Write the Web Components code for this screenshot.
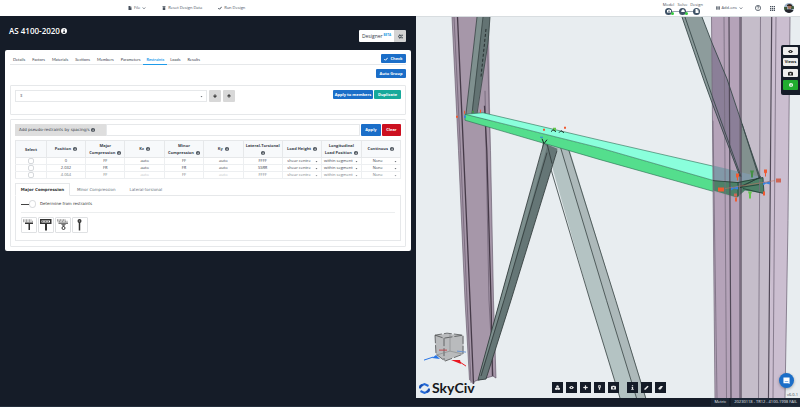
<!DOCTYPE html>
<html lang="en">
<head>
<meta charset="utf-8">
<title>AS 4100-2020 Restraints</title>
<style>
:root{--ink:#39414a;--navy:#151c28;--blue:#1b6ec8;--line:#e6e8ea;--wide:"DejaVu Sans",sans-serif}
html,body{margin:0;height:100%}
body{font:4px/6px "Open Sans",sans-serif;color:var(--ink);background:var(--navy)}
</style>
</head>
<body>
<design-app></design-app>
<script>
const define=(name,html,init)=>customElements.define(name,class extends HTMLElement{
  constructor(){super();this.attachShadow({mode:'open'});}
  connectedCallback(){
    if(this.shadowRoot.childNodes.length)return;
    const t=document.createElement('template');
    t.innerHTML='<style>*{box-sizing:border-box}button,select,input{font:inherit;color:inherit;margin:0;padding:0;border:0;background:none;border-radius:0;min-width:0}a{color:inherit;text-decoration:none}</style>'+(typeof html==='function'?html(this):html);
    this.shadowRoot.append(t.content.cloneNode(true));
    if(init)init(this);
  }
});

const icons={
  file:'<path d="M2 0h7v5h5v11H2z"/><path d="M10 0l4 4h-4z"/>',
  down:'<path d="M3 6l5 5 5-5" fill="none" stroke="currentColor" stroke-width="3"/>',
  caret:'<path d="M3 6h10l-5 6z"/>',
  trash:'<path d="M2 1h12v3H2zM3 5h10v11H3z"/>',
  check:'<path d="M1 8l5 5L15 3" fill="none" stroke="currentColor" stroke-width="4"/>',
  info:'<path fill-rule="evenodd" d="M8 0a8 8 0 100 16A8 8 0 008 0zM7 3h3v3H7zM6 7h4v4h1v2H5v-2h2V9H6z"/>',
  cogs:'<circle cx="6" cy="8" r="4" fill="none" stroke="currentColor" stroke-width="3"/><path d="M5 1h2v3H5zM5 12h2v3H5zM0 7h2v2H0z"/><circle cx="13" cy="4" r="2.5"/><circle cx="13" cy="12" r="2.5"/>',
  plus:'<path d="M6 1h4v5h5v4h-5v5H6v-5H1V6h5z"/>',
  plusd:'<path d="M6 1h4v5h5v3l-7 7-7-7V6h5z"/>',
  plusu:'<path d="M6 15h4v-5h5V7L8 0 1 7v3h5z"/>',
  grid4:'<path d="M0 2h7v5H0zM9 2h7v5H9zM0 9h7v5H0zM9 9h7v5H9z"/>',
  grid9:'<path d="M0 0h4v4H0zM6 0h4v4H6zM12 0h4v4h-4zM0 6h4v4H0zM6 6h4v4H6zM12 6h4v4h-4zM0 12h4v4H0zM6 12h4v4H6zM12 12h4v4h-4z"/>',
  help:'<circle cx="8" cy="8" r="7" fill="none" stroke="currentColor" stroke-width="2"/><path d="M5.500 6.500q0-3 2.500-3t2.500 2.200q0 1.300-2.500 2.800v1.500M8 11.500v1.500" fill="none" stroke="currentColor" stroke-width="1.800"/>',
  eye:'<path fill-rule="evenodd" d="M0 8q8-10 16 0-8 10-16 0zM8 6a2 2 0 100 4 2 2 0 000-4z"/>',
  camera:'<path fill-rule="evenodd" d="M0 4h4l1-2h6l1 2h4v10H0zM8 6a3 3 0 100 6 3 3 0 000-6z"/>',
  cubes:'<path d="M8 1l4 2v4L8 9 4 7V3zM4 8l4 2v4l-4 2-4-2v-4zM12 8l4 2v4l-4 2-4-2v-4z"/>',
  move:'<path d="M8 0l3 4H9.500v2.500H12V5l4 3-4 3V9.500H9.500V12H11l-3 4-3-4h1.500V9.500H4V11L0 8l4-3v1.500h2.500V4H5z"/>',
  bulb:'<path fill-rule="evenodd" d="M4 1h8v6l-2 3v5H6v-5L4 7zM7 3v4h2V3z"/>',
  i:'<path d="M6 1h4v3H6zM5 6h5v7h2v2H4v-2h2V8H5z"/>',
  ruler:'<path d="M1 12L11 2l4 3L5 15H1z"/>',
  eraser:'<path d="M1 10l8-7h7l-5 8-3 3H3z"/>',
  chat:'<path fill-rule="evenodd" d="M1 1h14v15l-3-2H1zM4 10q4 3 8 0v-1q-4 3-8 0z"/>',
  cloud:'<path d="M2 12a4 4 0 012-7 4 4 0 018 0 4 4 0 012 7z"/>',
  pinned:'<path d="M0 2h18M0 5h20" stroke="#aaa" stroke-width="3" stroke-dasharray="2 1"/><path d="M4 7h16v3h-6v12h-3V10H4z"/>',
  fixed:'<path fill-rule="evenodd" d="M0 0h23v10h-9v13h-4V10H0zM3 3v4h17V3z"/><path d="M4 5h15" stroke="#777" stroke-width="3" stroke-dasharray="2 1"/>',
  roller:'<path d="M0 2h18M1 5h20" stroke="#999" stroke-width="3" stroke-dasharray="2 1"/><path d="M3 7h19v3h-4l-5 6-5-6H3z" fill="#777"/><circle cx="13" cy="18" r="3" fill="none" stroke="currentColor" stroke-width="2"/>',
  free:'<circle cx="11" cy="4" r="4"/><path d="M9.500 6h3v17h-3z"/><circle cx="11" cy="4" r="1.500" fill="#999"/>'
};
define('ui-icon',h=>{const n=h.getAttribute('name'),b=['pinned','fixed','roller','free'].includes(n)?24:16;
  return `<style>:host{display:inline-block;width:4px;height:4px;flex:none;line-height:0}svg{width:100%;height:100%;display:block;fill:currentColor}</style><svg viewBox="0 0 ${b} ${b}" aria-hidden="true">${icons[n]}</svg>`});

define('ui-button',h=>`<style>:host{display:block;color:#fff;font-weight:700;border-radius:1px;background:var(--blue)}
button{width:100%;height:100%;display:flex;align-items:center;justify-content:center;gap:2px;white-space:nowrap}</style><button type="button" aria-label="${h.getAttribute('label')||h.textContent.trim()}"><slot></slot></button>`);

define('app-header',`<style>
:host{display:flex;align-items:center;height:16px;background:#fff;padding:0 6px 0 16%;color:#47505c}
nav,.right{display:flex;align-items:center;gap:16px}button{display:flex;align-items:center;gap:2px;white-space:nowrap}
.right{margin-left:auto;gap:12px}
.steps{display:flex;position:relative}.step{width:14px;display:flex;flex-direction:column;align-items:center;gap:1px;position:relative;font-size:4px;line-height:5px}
.dot{width:7px;height:7px;border-radius:50%;background:#3e5266;color:#fff;display:grid;place-items:center;z-index:1}
.step:not(:last-child):after{content:"";position:absolute;left:7px;top:9px;width:14px;height:1px;background:#9aa5b1}
.done:before{content:"";position:absolute;right:2px;bottom:0;width:3px;height:3px;border-radius:50%;background:#35c83e;z-index:2}
.face{width:10px;height:10px}
</style><nav aria-label="Main"><button><ui-icon name="file"></ui-icon>File<ui-icon name="down"></ui-icon></button><button><ui-icon name="trash"></ui-icon>Reset Design Data</button><button><ui-icon name="check"></ui-icon>Run Design</button></nav>
<div class="right"><div class="steps"><a href="#" class="step done">Model<span class="dot"><ui-icon name="camera"></ui-icon></span></a><a href="#" class="step done">Solve<span class="dot"><ui-icon name="cloud"></ui-icon></span></a><a href="#" class="step">Design<span class="dot"><ui-icon name="file"></ui-icon></span></a></div>
<button><ui-icon name="grid4"></ui-icon>Add-ons<ui-icon name="down"></ui-icon></button>
<button aria-label="Help"><ui-icon name="help" style="width:6px;height:6px"></ui-icon></button><button aria-label="Apps" style="margin-left:-3px"><ui-icon name="grid9" style="width:5px;height:5px"></ui-icon></button>
<button aria-label="Account" style="margin-left:-3px"><svg class="face" viewBox="0 0 20 20"><defs><clipPath id="c"><circle cx="10" cy="10" r="10"/></clipPath></defs><g clip-path="url(#c)"><path fill="#9db3c9" d="M0 0h20v20H0z"/><path fill="#3f5a3c" d="M0 8h6v6H0zM14 6h6v6h-6z"/><path fill="#23242a" d="M0 15q10-5 20 0v5H0z"/><circle cx="11" cy="8" r="4" fill="#a77560"/><path fill="#37251f" d="M6 4q5-4 10 0v2H6z"/></g></svg></button></div>`);

define('info-dot','<style>:host{display:inline-block;margin-left:1px;vertical-align:-1px}</style><ui-icon name="info"></ui-icon>');

define('restraint-table',h=>{
  const heads=['Select','Position','Major Compression','Kz','Minor Compression','Ky','Lateral-Torsional','Load Height','Longitudinal Load Position','Continous'];
  const rows=[['0','FF','auto','FF','auto','FFFF'],['2.032','FR','auto','FR','auto','SSRR'],['4.064','FF','auto','FF','auto','FFFF']];
  const sel=(o,l)=>`<td><span class="s"><select aria-label="${l}"><option>${o}</option></select><ui-icon name="caret"></ui-icon></span></td>`;
  return `<style>:host{display:block}table{width:100%;table-layout:fixed;border-collapse:collapse;text-align:center;border:1px solid var(--line)}
th{background:#f7f9fb;height:17px;font-weight:700;line-height:7px;padding:0;border:1px solid var(--line);border-width:0 1px 1px 0}
td{height:7px;line-height:6px;padding:0;border:1px solid #edeff1;border-width:0 1px 1px 0}
th:first-child{width:8%}tr:last-child td{color:#757b82}tr:last-child .dim{color:#c3c6c9}
input{appearance:none;width:6px;height:6px;border:1px solid #d6d9dc;border-radius:2px;background:#fff;display:block;margin:auto}
.s{display:flex;align-items:center;padding-right:3px}select{appearance:none;flex:1;height:6px;line-height:6px;text-align:center;text-align-last:center}.s ui-icon{width:3px;height:3px}</style>
<table><thead><tr>${heads.map((t,i)=>`<th scope="col">${t.replace('Major ','Major<br>').replace('Minor ','Minor<br>').replace('Longitudinal ','Longitudinal<br>').replace('Torsional','Torsional<br>')}${i?(i==6?'':' ')+'<info-dot></info-dot>':''}</th>`).join('')}</tr></thead>
<tbody>${rows.map(r=>`<tr><td><input type="checkbox" aria-label="Select position ${r[0]}"></td>${r.map(c=>`<td class="${c=='auto'?'dim':''}">${c}</td>`).join('')}${sel('shear centre','Load height')}${sel('within segment','Longitudinal load position')}${sel('None','Continous')}</tr>`).join('')}</tbody></table>`});

define('restraint-tabs',`<style>
:host{display:block}.tabs{display:flex;height:13px;font-family:var(--wide)}
.tabs button{padding:0 7px;height:13px;color:#68727c}.tabs .on{font:700 4px/6px var(--wide);color:#333;border:1px solid var(--line);border-bottom-color:#fff;min-width:55px;padding:0 4px;background:#fff;position:relative;z-index:1}
.pane{border:1px solid var(--line);margin-top:-1px;padding:5px 5px 7px}
label{display:flex;align-items:center;gap:4px;height:6px;font-family:var(--wide);color:#333}
input{appearance:none;width:15px;height:6px;display:flex;align-items:center}
input:before{content:"";width:9px;height:1px;background:#444}input:after{content:"";width:6px;height:6px;border:1px solid #dcdee0;border-radius:50%;background:#fff}
hr{border:0;border-top:1px solid #eceeef;margin:5px 0 4px}
.icons{display:flex;gap:1px}.icons button{border:1px solid #dfe1e3;border-radius:1px;width:16px;height:16px;color:#333;display:grid;place-items:center}.icons ui-icon{width:12px;height:12px}
</style><div class="tabs" role="tablist"><button role="tab" class="on" aria-selected="true">Major Compression</button><button role="tab">Minor Compression</button><button role="tab">Lateral-torsional</button></div>
<div class="pane"><label><input type="checkbox" role="switch">Determine from restraints</label><hr>
<div class="icons"><button aria-label="Pinned"><ui-icon name="pinned"></ui-icon></button><button aria-label="Fixed"><ui-icon name="fixed"></ui-icon></button><button aria-label="Roller"><ui-icon name="roller"></ui-icon></button><button aria-label="Free"><ui-icon name="free"></ui-icon></button></div></div>`);

define('design-panel',`<style>
:host{display:block;padding:14px 5px 0}
.head{display:flex;justify-content:space-between;padding:0 5px 0 4px;height:20px}
h1{font-size:8px;line-height:12px;margin:-5px 0 0;color:#fff;font-weight:600;display:flex;align-items:center;height:12px;gap:1px}
.mode{display:flex;height:12px;border-radius:1px;overflow:hidden}.mode button{background:#fff;font-size:5px;line-height:6px;width:35px;white-space:nowrap}.mode sup{font-size:3px;line-height:0;color:#1c97e2;font-weight:700;vertical-align:2px;margin-left:1px}.mode .cog{width:12px;background:#d3d3d3;display:grid;place-items:center}
.card{background:#fff;border-radius:2px;padding:5px 5px 4px}
.nav{display:flex;align-items:flex-end;justify-content:space-between;border-bottom:1px solid var(--line);height:10px;font-family:Lato,sans-serif}
.nav nav{display:flex;gap:7px;padding-left:3px}.nav a{height:9px;line-height:9px}.nav a.on{color:#1e9bea;box-shadow:0 1px #1e9bea;font-weight:700;padding:0 3px;margin:0 -4px}
.nav ui-button{width:25px;height:9px;margin-bottom:1px;font-family:"Open Sans",sans-serif}
.auto{width:30px;height:9px;margin:4px 0 7px auto}
.box{border:1px solid var(--line);border-radius:1px;padding:4px}
.box+.box{margin-top:4px;padding-bottom:5px}
.row{display:flex;gap:1px}.pick{flex:1;max-width:192px;display:flex;align-items:center;border:1px solid var(--line);height:12px;padding-right:3px}.pick select{appearance:none;flex:1;padding-left:4px}
.pick ui-icon{width:3px;height:3px}.sq{width:12px;height:12px;background:#d8d8d8;color:#444;border-radius:1px;margin-left:1px}.sq+.sq{margin-right:auto}
.sp{height:12px;gap:1px}.sp label{font:4px/12px var(--wide);background:#dedede;width:91px;padding-left:4px;white-space:nowrap}.sp input{flex:1;border:1px solid var(--line);margin-left:-1px}
restraint-table{margin:4px 0}
</style><div class="head"><h1>AS 4100-2020<ui-icon name="info" style="width:6px;height:6px"></ui-icon></h1><div class="mode"><button>Designer<sup>BETA</sup></button><button class="cog" aria-label="Settings"><ui-icon name="cogs" style="width:5px;height:5px"></ui-icon></button></div></div>
<div class="card"><div class="nav"><nav aria-label="Sections"><a href="#">Details</a><a href="#">Factors</a><a href="#">Materials</a><a href="#">Sections</a><a href="#">Members</a><a href="#">Parameters</a><a href="#" class="on">Restraints</a><a href="#">Loads</a><a href="#">Results</a></nav><ui-button><ui-icon name="check"></ui-icon>Check</ui-button></div>
<ui-button class="auto">Auto Group</ui-button>
<div class="box" style="min-height:30px"><div class="row"><div class="pick"><select aria-label="Member"><option>3</option></select><ui-icon name="caret"></ui-icon></div><ui-button class="sq" label="Next"><ui-icon name="plusd"></ui-icon></ui-button><ui-button class="sq" label="Previous"><ui-icon name="plusu"></ui-icon></ui-button><ui-button style="width:40px;height:9px">Apply to members</ui-button><ui-button style="width:27px;height:9px;background:#17a99b">Duplicate</ui-button></div></div>
<div class="box"><div class="row sp"><label for="sp">Add pseudo-restraints by spacing/s<info-dot></info-dot></label><input id="sp"><ui-button style="width:20px">Apply</ui-button><ui-button style="width:19px;background:#cc1020">Clear</ui-button></div>
<restraint-table></restraint-table><restraint-tabs></restraint-tabs></div></div>`);

define('frame-scene',`<style>:host{display:block}svg{width:100%;height:100%;display:block}</style>
<svg viewBox="416 16 384 382" preserveAspectRatio="none" role="img" aria-label="Structural frame model" stroke-linejoin="round">
<path fill="#a697a9" d="M452 16h37l1.500 134 3 150 2.500 78-3-2-18 5-2 3-3.500-4L465 300l-6.500-150z"/>
<g fill="none" stroke="#5d5163"><path stroke-width=".6" d="M452 16l6.500 134 6.500 150 4.500 80M454 16l6.500 134 6.500 150 4 83M487 16l2 90 1.500 44 3 150 2.500 78M485 90l4 210 4 76"/><path stroke="#453a48" stroke-width="1.300" d="M457.500 16l6 134 6.500 150 3.500 84M484.500 105l2.300 45 4.200 150 1.500 76"/><path stroke-width=".7" d="M473 384l2-3 18-5 3 2"/></g>
<path fill="#7f908f" d="M477 16h13l-1 20-12.500 77H466z"/><path fill="#5c6c6c" fill-opacity=".8" d="M483 16h7l-2 26-11.500 71h-5z"/><path fill="none" stroke="#394545" stroke-width=".8" d="M477 16l-11 97M483 16l-11 97M490 16l-2 26-11 71"/><path stroke="#252d2e" stroke-dasharray="3 2" stroke-width="1" d="M486 28l-5 48"/>
<path fill="#b4c3c3" d="M545 141l24 6 46.700 153L646 398h-26l-30-98z"/><path fill="#adb9ba" d="M560 145l9 5 46.700 150L646 398h-9.500l-30-98-45-150z"/><path fill="none" stroke="#465151" stroke-width=".9" d="M543 142l47 158 30 98M560 145l46.500 155 30 98M568 147l47.700 153 30 98"/>
<path fill="#657676" d="M543 142l14.500 6L511 300l-25 79-8 1 22-80 42-150z"/><path fill="#7d8f8e" d="M543 142l4 4-43 154-24 76-2 4 22-80 42-150z"/><path fill="none" stroke="#354040" stroke-width=".9" d="M544 142l-3 10-41 148-22 80 8-1 25-79 46-150M547 152l-43 148-23 76M547 143l5 20"/>
<path fill="#54de8d" d="M465 113.500l135 33.800 112 32.200 25 1 27-4v17l-27 4-25-7L600 159l-135-39.500z"/><path fill="#8affdc" d="M465 113.500l18-1.500L600 139.500l163 37.500-26 4-25-1.500-112-32.200z"/>
<path fill="none" stroke="#286b50" stroke-width=".6" d="M465 113.500v6L600 159l112 31.500 25 7M465 113.500L600 147.300l112 32.200 25 2M465 113.500l18-1.500L600 139.500l163 37.500v16"/>
<path fill="#8d9c9c" d="M682 16h20l10 26 15 36 15 45 18 54-15 9-7-14-26-70-8-22z"/>
<path fill="#b39fb6" fill-opacity=".96" d="M711.500 16H741v382h-26z"/><path fill="#c5bdca" d="M741 16h31l-2.500 382H741z"/><path fill="#cbbed0" d="M772 16h18l-2 204-3 178h-15.500z"/>
<path fill="#8b7f98" d="M712 42l15 36 14 43v60l-3-9-26-70z"/><path fill="#82918f" d="M741 121l20 56-18 9-2-5z"/>
<path fill="#8299a8" d="M713 165l50 12-26 4-24-1.500z"/><path fill="#4d8168" d="M713 180l24 1.500 26-4.500 1 16-19-3-8 7-24-7z"/>
<g fill="none" stroke="#766c7d" stroke-width=".8"><path d="M711.500 16l3.500 382M713 120l4 278M724 16l2.500 382M739.500 16V398M760.500 16l-2 382M776 16l-3 382M790 16l-2 204-3 178"/><path stroke="#514958" stroke-width="1.200" d="M729 16l2 382M741 16V398M771.700 16l-3.200 382"/></g>
<path fill="none" stroke="#39484a" stroke-width=".9" d="M682 16l22 64 8 22 28 74M685 16l27 79 29 81M702 16l10 26 15 36 15 45 18 54-20 9M742 123l17 54"/>
<path fill="none" stroke="#203c34" stroke-width=".8" d="M713 180l25 2v14M740 187l21-11M740 187l19-3M738 182l25-5 1 16-21-5"/>
<g fill="#f05a31"><path d="M718 187h6v4h-6zM736 173h3v3l-1 1v3h-1v-3h-1zM735 197h2v4h-2zM764 169h3v3l-1 1v3h-1v-3l-1-1zM763 191h2v4h-2zM456 115h2v2h-2zM464 110h1v3h-1zM480 109h1v3h-1zM543 128h2v2h-2zM564 126h2v2h-2z"/><path fill="#ce6656" d="M776 178h5v4h-5zM734 193h3v3h-3z"/></g>
<g fill="#3683df"><path d="M731 186l3 1 4-2v4l-4-1-3 2zM763 181l3 1 4-2v4l-4-1-3 2zM464 115h2v2h-2zM540 136h3v1h-3z"/></g><g fill="#64c64b"><path d="M748 191h4l-1 3v4h-2v-4zM553 127h3v3h-3z"/><path fill="#438f46" d="M750 170h4l-1 3v4h-2v-4zM472 110h2v2h-2z"/></g>
<path fill="none" stroke="#182c28" d="M551 131l2-2 3 2M559 132l2-2 3 2M542 138l2 5 3-4"/><path stroke="#bd725f" stroke-width=".6" d="M725 188l50-8"/>
<path fill="#b9bbbd" d="M435 335l12-1.500 16.500 2v18L445 361l-9-7z"/><path fill="none" stroke="#4c4f50" stroke-width=".8" stroke-dasharray="8 2" d="M435 335l9 3 19-3M435 335l1 19 9 7 18-7v-19l-16-2-12 2M444 338v22"/><path fill="none" stroke="#808486" stroke-width=".6" d="M450 334v17l13 3M450 351l-14 4"/>
<g fill="#e91720"><path d="M451 360h9l1 4z"/><path stroke="#e91720" d="M460 362l6 4"/><path stroke="#c2474d" d="M439 350h8"/></g><g fill="#2774e5"><path d="M432 358l4-3 4 4z"/><path fill="none" stroke="#2774e5" d="M424 360l9-3"/><path stroke="#6a93cf" d="M457 351l9 1"/></g>
</svg>`);

define('model-viewer',`<style>
:host{display:block;position:relative;background:#e8edf0;border-top:1px solid #d8dde0;overflow:hidden}
frame-scene{position:absolute;inset:0}
.side{position:absolute;right:0;top:28px;background:var(--navy);width:19px;padding:2px;display:grid;gap:3px;border-radius:2px 0 0 2px}.side ui-button{width:15px;height:8px;background:#eee;color:#222}.side .go{height:10px;background:#21ad2f;color:#fff;margin-bottom:3px}
.brand{position:absolute;left:3px;bottom:1px;display:flex;align-items:center;gap:2px;font:700 14px/18px Lato,sans-serif;color:#15171b}.brand svg{width:11px;height:13px}
.tools{position:absolute;left:136px;bottom:5px;display:flex;gap:3px}.tools ui-button{width:11px;height:11px;border-radius:0;background:var(--navy);color:#eee}.tools .gap{margin-left:5px}
.chat{position:absolute;right:6px;bottom:10px;width:15px;height:15px;border-radius:50%;box-shadow:0 1px 3px #0005}.v{position:absolute;right:2px;bottom:1px;font-size:4px;line-height:5px}
</style><frame-scene></frame-scene>
<div class="side"><ui-button label="Visibility"><ui-icon name="eye" style="width:5px;height:5px"></ui-icon></ui-button><ui-button>Views</ui-button><ui-button label="Screenshot"><ui-icon name="camera" style="width:5px;height:5px"></ui-icon></ui-button><ui-button class="go" label="Help"><ui-icon name="info"></ui-icon></ui-button></div>
<div class="brand"><svg viewBox="0 0 22 26" fill="none" stroke="#2469d6" stroke-width="4"><path d="M2 13q0-6 5-7l4-2 4 2 4 2M20 13q0 6-5 7l-4 2-4-2-4-2"/><path stroke="#174db0" d="M2 12l1-4 4-2M20 14l-1 4-4 2"/></svg>SkyCiv</div>
<div class="tools">${['cubes','eye','move','bulb','camera','i','ruler','eraser'].map(n=>`<ui-button class="${n=='i'?'gap':''}" label="${n}"><ui-icon name="${n}" style="width:5px;height:5px"></ui-icon></ui-button>`).join('')}</div>
<ui-button class="chat" label="Chat"><ui-icon name="chat" style="width:7px;height:7px"></ui-icon></ui-button><span class="v">v6.0.1</span>`);

define('status-bar',`<style>:host{display:flex;justify-content:flex-end;height:9px;color:#e8edf2;line-height:8px;border-bottom:1px solid #242e3b}
span{background:#1b2634;padding:0 3px;margin-left:2px}</style><span>Metric</span><span>20230118 - TR12 - 4100-1998 FAIL</span>`);

define('design-app',`<style>
:host{display:grid;grid-template-rows:auto 1fr auto;min-height:100vh}
main{display:grid;grid-template-columns:52% 1fr}</style>
<app-header></app-header><main><design-panel></design-panel><model-viewer></model-viewer></main><status-bar></status-bar>`);
</script>
</body>
</html>
